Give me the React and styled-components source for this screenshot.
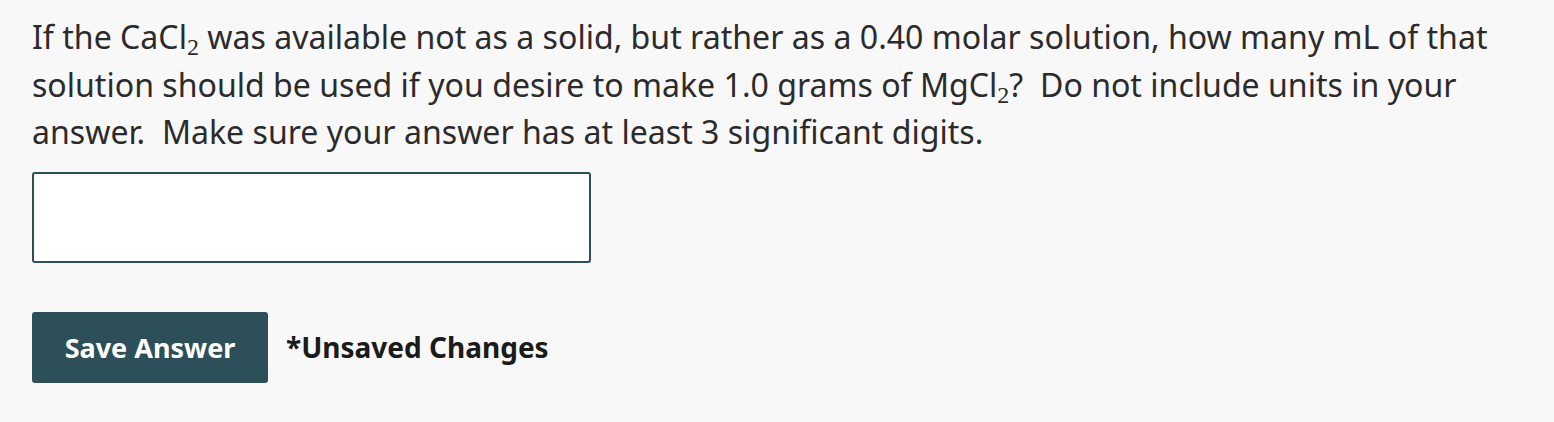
import React, { useState } from "react";
import styled, { createGlobalStyle } from "styled-components";

const GlobalStyle = createGlobalStyle`
  html, body {
    margin: 0;
    padding: 0;
    background: #f8f8f8;
  }
  body {
    font-family: "Noto Sans", "Open Sans", sans-serif;
    color: #2b2b2b;
  }
`;

const Page = styled.div`
  padding: 13px 32px 0 32px;
  min-height: 422px;
  box-sizing: border-box;
`;

const Question = styled.p`
  margin: 0;
  width: 1480px;
  font-size: 32.1px;
  line-height: 47.5px;
`;

const Sub = styled.sub`
  font-family: "Liberation Serif", serif;
  font-size: 24px;
  line-height: 1;
  vertical-align: baseline;
  position: relative;
  top: 6px;
`;

const AnswerInput = styled.input`
  display: block;
  margin-top: 16px;
  width: 559px;
  height: 91px;
  box-sizing: border-box;
  border: 2px solid #2c4f5a;
  border-radius: 3px;
  background: #ffffff;
  font: inherit;
  font-size: 26px;
  padding: 0 14px;
  outline: none;
`;

const Actions = styled.div`
  display: flex;
  align-items: center;
  gap: 18px;
  margin-top: 49px;
`;

const SaveButton = styled.button`
  width: 236px;
  height: 71px;
  background: #2c4f5a;
  color: #ffffff;
  border: none;
  border-radius: 3px;
  font-family: "Noto Sans", sans-serif;
  font-weight: 700;
  font-size: 27px;
  cursor: pointer;
`;

const Status = styled.span`
  font-weight: 700;
  font-size: 28px;
  color: #1b1b1b;
`;

export default function App() {
  const [value, setValue] = useState("");

  return (
    <Page>
      <GlobalStyle />
      <Question>
        If the CaCl<Sub>2</Sub> was available not as a solid, but rather as a 0.40 molar
        solution, how many mL of that solution should be used if you desire to make 1.0
        grams of MgCl<Sub>2</Sub>?&nbsp; Do not include units in your answer.&nbsp; Make
        sure your answer has at least 3 significant digits.
      </Question>
      <AnswerInput value={value} onChange={(e) => setValue(e.target.value)} />
      <Actions>
        <SaveButton>Save Answer</SaveButton>
        <Status>*Unsaved Changes</Status>
      </Actions>
    </Page>
  );
}
